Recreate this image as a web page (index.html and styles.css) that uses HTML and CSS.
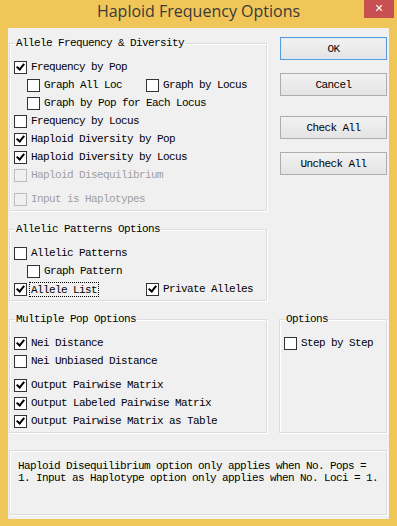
FILE: index.html
```html
<!DOCTYPE html>
<html lang="en">

<head>
    <meta charset="UTF-8">
    <meta name="viewport" content="width=device-width, initial-scale=1.0">
    <title>Haploid Frequency Options</title>
    <link rel="stylesheet" href="styles.css">
</head>

<body>
    <div class="window">
        <div class="title-bar">
            <span class="title">Haploid Frequency Options</span>
            <span class="close">&#x2715;</span>
        </div>

        <div class="client">
            <div class="top">
                <div class="left-col">
                    <fieldset class="group">
                        <legend>Allele Frequency &amp; Diversity</legend>
                        <div class="row"><span class="box checked"></span><span class="label">Frequency by Pop</span></div>
                        <div class="row split">
                            <div class="cell indent"><span class="box"></span><span class="label">Graph All Loc</span></div>
                            <div class="cell"><span class="box"></span><span class="label">Graph by Locus</span></div>
                        </div>
                        <div class="row indent"><span class="box"></span><span class="label">Graph by Pop for Each Locus</span></div>
                        <div class="row"><span class="box"></span><span class="label">Frequency by Locus</span></div>
                        <div class="row"><span class="box checked"></span><span class="label">Haploid Diversity by Pop</span></div>
                        <div class="row"><span class="box checked"></span><span class="label">Haploid Diversity by Locus</span></div>
                        <div class="row disabled"><span class="box"></span><span class="label">Haploid Disequilibrium</span></div>
                        <div class="row disabled spaced"><span class="box"></span><span class="label">Input is Haplotypes</span></div>
                    </fieldset>

                    <fieldset class="group">
                        <legend>Allelic Patterns Options</legend>
                        <div class="row"><span class="box"></span><span class="label">Allelic Patterns</span></div>
                        <div class="row indent"><span class="box"></span><span class="label">Graph Pattern</span></div>
                        <div class="row split">
                            <div class="cell"><span class="box checked"></span><span class="label focus">Allele List</span></div>
                            <div class="cell"><span class="box checked"></span><span class="label">Private Alleles</span></div>
                        </div>
                    </fieldset>
                </div>

                <div class="buttons">
                    <button class="btn default">OK</button>
                    <button class="btn">Cancel</button>
                    <button class="btn far">Check All</button>
                    <button class="btn">Uncheck All</button>
                </div>
            </div>

            <div class="middle">
                <fieldset class="group multi">
                    <legend>Multiple Pop Options</legend>
                    <div class="row"><span class="box checked"></span><span class="label">Nei Distance</span></div>
                    <div class="row"><span class="box"></span><span class="label">Nei Unbiased Distance</span></div>
                    <div class="row spaced"><span class="box checked"></span><span class="label">Output Pairwise Matrix</span></div>
                    <div class="row"><span class="box checked"></span><span class="label">Output Labeled Pairwise Matrix</span></div>
                    <div class="row"><span class="box checked"></span><span class="label">Output Pairwise Matrix as Table</span></div>
                </fieldset>

                <fieldset class="group options">
                    <legend>Options</legend>
                    <div class="row"><span class="box"></span><span class="label">Step by Step</span></div>
                </fieldset>
            </div>

            <div class="note">
                Haploid Disequilibrium option only applies when No. Pops = 1. Input as Haplotype option only applies when No. Loci = 1.
            </div>
        </div>
    </div>
</body>

</html>
```

FILE: styles.css
```css
body {
    margin: 0;
    background-color: #f0c659;
}

.window {
    width: 397px;
    height: 526px;
    box-sizing: border-box;
    padding: 0 8px 7px 8px;
    background-color: #f0c659;
    display: flex;
    flex-direction: column;
}

.title-bar {
    height: 28px;
    position: relative;
    text-align: center;
}

.title {
    font-family: 'Open Sans', sans-serif;
    font-size: 16px;
    line-height: 22px;
    color: #3a3a3a;
}

.close {
    position: absolute;
    top: 0;
    right: -5px;
    width: 30px;
    height: 18px;
    background-color: #c75050;
    color: white;
    font-family: 'DejaVu Sans', sans-serif;
    font-size: 11px;
    line-height: 18px;
    text-align: center;
}

.client {
    flex: 1;
    background-color: #f0f0f0;
    padding: 9px 2px 0 1px;
    font-family: 'Liberation Mono', monospace;
    font-size: 11px;
    letter-spacing: -0.6px;
    line-height: 12px;
    color: #000;
}

.top {
    display: flex;
}

.left-col {
    width: 258px;
}

.group {
    margin: 0 0 12px 0;
    padding: 9px 4px 2px 4px;
    border: 1px solid #dcdcdc;
    box-shadow: inset 1px 1px 0 #fff, 1px 1px 0 #fff;
    min-width: 0;
}

.group legend {
    padding: 0 1px;
    margin-left: 1px;
}

.row {
    height: 18px;
    display: flex;
    align-items: center;
}

.row.split {
    display: grid;
    grid-template-columns: 132px auto;
}

.cell {
    display: flex;
    align-items: center;
}

.indent {
    padding-left: 13px;
}

.spaced {
    margin-top: 6px;
}

.box {
    width: 11px;
    height: 11px;
    border: 1px solid #333;
    background-color: #fff;
    flex-shrink: 0;
    position: relative;
}

.box.checked::after {
    content: "";
    position: absolute;
    left: 3px;
    top: 0px;
    width: 3px;
    height: 6px;
    border: solid #000;
    border-width: 0 2px 2px 0;
    transform: rotate(40deg);
}

.label {
    margin-left: 4px;
    white-space: nowrap;
}

.label.focus {
    margin-left: 2px;
    padding: 1px 1px 0 1px;
    border: 1px dotted #000;
}

.disabled .box {
    border-color: #bcbcbc;
    background-color: #f0f0f0;
}

.disabled .label {
    color: #a0a0a0;
}

.buttons {
    margin: 0 0 0 13px;
    width: 107px;
    display: flex;
    flex-direction: column;
}

.btn {
    height: 23px;
    margin-bottom: 13px;
    border: 1px solid #adadad;
    background: linear-gradient(#f2f2f2, #e4e4e4);
    font-family: 'Liberation Mono', monospace;
    font-size: 11px;
    letter-spacing: -0.6px;
    color: #000;
    padding: 0;
}

.btn.default {
    border-color: #5a9ad8;
    box-shadow: inset 0 0 0 1px #dbeaf8;
}

.btn.far {
    margin-top: 7px;
}

.middle {
    display: flex;
    gap: 12px;
}

.middle .group {
    margin-bottom: 17px;
}

.multi {
    width: 258px;
    box-sizing: border-box;
}

.options {
    width: 108px;
    box-sizing: border-box;
}

.note {
    height: 65px;
    box-sizing: border-box;
    width: 378px;
    padding: 9px 2px 9px 8px;
    border: 1px solid #dcdcdc;
    box-shadow: inset 1px 1px 0 #fff, 1px 1px 0 #fff;
}
```
